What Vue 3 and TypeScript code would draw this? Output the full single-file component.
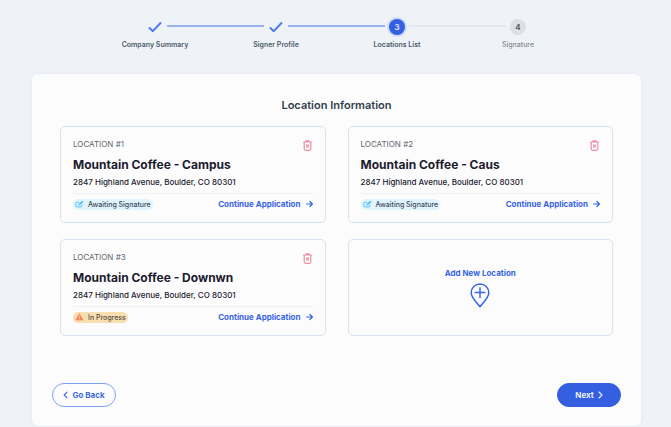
<script setup lang="ts">
interface Step {
  label: string
  state: 'done' | 'current' | 'upcoming'
}

interface Location {
  id: number
  name: string
  address: string
  status: 'awaiting' | 'progress'
}

const steps: Step[] = [
  { label: 'Company Summary', state: 'done' },
  { label: 'Signer Profile', state: 'done' },
  { label: 'Locations List', state: 'current' },
  { label: 'Signature', state: 'upcoming' },
]

const address = '2847 Highland Avenue, Boulder, CO 80301'

const locations: Location[] = [
  { id: 1, name: 'Mountain Coffee - Campus', address, status: 'awaiting' },
  { id: 2, name: 'Mountain Coffee - Caus', address, status: 'awaiting' },
  { id: 3, name: 'Mountain Coffee - Downwn', address, status: 'progress' },
]

const statusText: Record<Location['status'], string> = {
  awaiting: 'Awaiting Signature',
  progress: 'In Progress',
}
</script>

<template>
  <div class="page">
    <ol class="stepper">
      <li v-for="(step, i) in steps" :key="step.label" class="step" :class="step.state">
        <div class="track">
          <span class="line before"></span>
          <span class="slot">
            <svg v-if="step.state === 'done'" class="check" viewBox="0 0 14 12" aria-hidden="true">
              <path d="M1.5 7 4.8 10.2 12.5 2" />
            </svg>
            <span v-else class="dot">{{ i + 1 }}</span>
          </span>
          <span class="line after"></span>
        </div>
        <span class="step-label">{{ step.label }}</span>
      </li>
    </ol>

    <main class="panel">
      <h1 class="title">Location Information</h1>

      <div class="grid">
        <article v-for="loc in locations" :key="loc.id" class="card">
          <header class="card-head">
            <span class="card-no">LOCATION #{{ loc.id }}</span>
            <button type="button" class="trash" :aria-label="`Delete location ${loc.id}`">
              <svg viewBox="0 0 9 11" aria-hidden="true">
                <path d="M1.2 2V8.8Q1.2 10.3 2.7 10.3H6.3Q7.8 10.3 7.8 8.8V2M.6 2H8.4M2.8 1.8V.8H6.2V1.8M3.5 5 5.5 7M5.5 5 3.5 7" />
              </svg>
            </button>
          </header>
          <h2 class="card-name">{{ loc.name }}</h2>
          <p class="card-address">{{ loc.address }}</p>
          <footer class="card-foot">
            <span class="badge" :class="loc.status">
              <svg v-if="loc.status === 'awaiting'" viewBox="0 0 10 8" aria-hidden="true">
                <path class="sheet" d="M4 2H1.8Q1 2 1 2.8V6.4Q1 7.2 1.8 7.2H6.6Q7.4 7.2 7.4 6.4V5" />
                <path class="pen" d="M3.6 5.6 4.2 3.8 8.3.4 9.6 1.7 5.4 5.2Z" />
              </svg>
              <svg v-else viewBox="0 0 10 8" aria-hidden="true">
                <path class="warn" d="M5 .8 8.9 7.3H1.1Z" />
                <path class="mark" d="M5 3V5M5 5.8V6.5" />
              </svg>
              {{ statusText[loc.status] }}
            </span>
            <a href="#" class="continue">
              Continue Application
              <svg viewBox="0 0 7 8" aria-hidden="true"><path d="M.6 4H6.4M3.9 1.5 6.4 4 3.9 6.5" /></svg>
            </a>
          </footer>
        </article>

        <button type="button" class="card add">
          Add New Location
          <svg viewBox="0 0 20 25" aria-hidden="true">
            <path d="M10 23.8C7.6 20.3 1.2 14.8 1.2 9.7A8.8 8.8 0 0 1 18.8 9.7C18.8 14.8 12.4 20.3 10 23.8ZM10 4.8V14.4M5.2 9.6H14.8" />
          </svg>
        </button>
      </div>

      <div class="actions">
        <button type="button" class="btn outline">
          <svg viewBox="0 0 5 8" aria-hidden="true"><path d="M4 1.2 1.2 4 4 6.8" /></svg>
          Go Back
        </button>
        <button type="button" class="btn solid">
          Next
          <svg viewBox="0 0 5 8" aria-hidden="true"><path d="M1 1 4 4 1 7" /></svg>
        </button>
      </div>
    </main>
  </div>
</template>

<style>
body {
  margin: 0;
  background: #eff3f8;
}
</style>

<style scoped>
* {
  box-sizing: border-box;
}

.page {
  padding: 17px 30px 1px 32px;
  font-family: Inter, 'Liberation Sans', sans-serif;
  color: #1c1b2e;
}

button {
  font-family: inherit;
  cursor: pointer;
}

svg {
  display: block;
  flex: none;
  fill: none;
  stroke: currentColor;
  stroke-linecap: round;
  stroke-linejoin: round;
}

.stepper {
  display: flex;
  max-width: 484px;
  margin: 0 auto;
  padding: 0;
  list-style: none;
}

.step {
  flex: 1;
  display: flex;
  flex-direction: column;
  align-items: center;
  gap: 3px;
}

.track {
  display: flex;
  align-items: center;
  width: 100%;
  height: 20px;
}

.line {
  flex: 1;
  height: 2px;
  margin-bottom: 2px;
  background: #98b5f0;
}

.current .after,
.upcoming .before {
  background: #e4e8ee;
}

.step:first-child .before,
.step:last-child .after {
  background: transparent;
}

.slot {
  display: flex;
  justify-content: center;
  width: 24px;
}

.check {
  width: 14px;
  height: 12px;
  color: #4a7af0;
  stroke-width: 1.9;
}

.dot {
  width: 16px;
  border-radius: 8px;
  background: #dcdfe3;
  color: #4a4f58;
  font-size: 8px;
  font-weight: 600;
  line-height: 16px;
  text-align: center;
}

.current .dot {
  background: #345fe0;
  color: #e9effd;
  box-shadow: 0 0 0 2px #cddbf8;
}

.step-label {
  font-size: 7px;
  font-weight: 600;
  line-height: 10px;
  color: #4a5a6a;
}

.upcoming .step-label {
  font-weight: 500;
  color: #85898f;
}

.panel {
  margin-top: 24px;
  padding: 23px 20px 19px;
  border-radius: 6px;
  background: #fcfcfd;
  box-shadow: 0 0 3px #dfe6ee;
}

.title {
  margin: 0;
  font-size: 11px;
  font-weight: 600;
  line-height: 16px;
  text-align: center;
  color: #33424f;
}

.grid {
  display: grid;
  grid-template-columns: 1fr 1fr;
  gap: 16px 22px;
  margin-top: 13px;
  padding: 0 8px;
}

.card {
  min-height: 97px;
  padding: 10px 12px;
  border: 1px solid #d6e3ee;
  border-radius: 5px;
  background: #fcfcfd;
}

.card-head {
  display: flex;
  align-items: center;
  justify-content: space-between;
  height: 14px;
}

.card-no {
  font-size: 8px;
  line-height: 12px;
  color: #60636c;
}

.trash {
  padding: 3px 1px 0;
  border: 0;
  background: none;
  color: #ec8fa4;
}

.trash svg {
  width: 9px;
  height: 11px;
  stroke-width: 1.2;
}

.card-name {
  margin: 6px 0 0;
  font-size: 12px;
  font-weight: 700;
  line-height: 16px;
}

.card-address {
  margin: 4px 0 0;
  font-size: 8px;
  font-weight: 500;
  line-height: 10px;
}

.card-foot {
  display: flex;
  align-items: center;
  justify-content: space-between;
  margin-top: 6px;
  padding-top: 4px;
  border-top: 1px solid #eef0f2;
}

.badge {
  display: flex;
  align-items: center;
  gap: 4px;
  padding: 0 2px;
  border-radius: 6px;
  font-size: 7px;
  font-weight: 500;
  line-height: 11px;
  color: #3c4858;
}

.badge svg {
  width: 9px;
  height: 8px;
}

.badge.awaiting {
  background: #e0f4fd;
}

.badge.progress {
  background: #f8dfb0;
  color: #574b43;
}

.sheet {
  stroke: #4dbcf5;
}

.pen {
  fill: #4dbcf5;
  stroke: none;
}

.warn {
  fill: #f6845c;
  stroke: #f6845c;
  stroke-width: 0.8;
}

.mark {
  stroke: #f8dfb0;
  stroke-width: 0.7;
}

.continue {
  display: flex;
  align-items: center;
  gap: 5px;
  font-size: 8px;
  font-weight: 700;
  line-height: 12px;
  color: #3765e6;
  text-decoration: none;
}

.continue svg {
  width: 7px;
  height: 8px;
  stroke-width: 1.2;
}

.add {
  display: flex;
  flex-direction: column;
  align-items: center;
  justify-content: center;
  gap: 4px;
  font-size: 8px;
  font-weight: 700;
  line-height: 12px;
  color: #3765e6;
}

.add svg {
  width: 20px;
  height: 25px;
  stroke-width: 1.5;
}

.actions {
  display: flex;
  justify-content: space-between;
  margin-top: 47px;
}

.btn {
  display: flex;
  align-items: center;
  justify-content: center;
  gap: 4px;
  width: 64px;
  height: 24px;
  padding: 0;
  border: 1px solid #3765e6;
  border-radius: 12px;
  font-size: 8px;
  font-weight: 700;
}

.btn svg {
  width: 5px;
  height: 8px;
  stroke-width: 1.1;
}

.outline {
  border-color: #7fa0f0;
  background: #fcfcfd;
  color: #4069e2;
}

.solid {
  background: #345fe0;
  border-color: #345fe0;
  color: #edf2fe;
}
</style>
